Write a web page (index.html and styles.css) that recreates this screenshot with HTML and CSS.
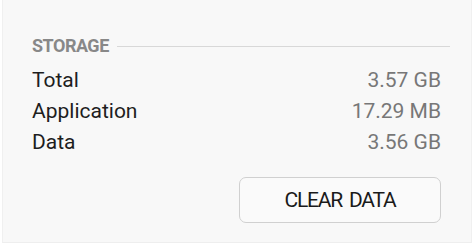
FILE: index.html
```html
<!DOCTYPE html>
<html lang="en">
<head>
    <meta charset="UTF-8">
    <meta name="viewport" content="width=device-width, initial-scale=1.0">
    <title>Storage</title>
    <link rel="stylesheet" href="styles.css">
</head>
<body>
    <div class="storage-card">
        <div class="section-header">
            <span class="section-title">STORAGE</span>
            <span class="section-line"></span>
        </div>

        <div class="storage-row">
            <span class="row-label">Total</span>
            <span class="row-value">3.57 GB</span>
        </div>
        <div class="storage-row">
            <span class="row-label">Application</span>
            <span class="row-value">17.29 MB</span>
        </div>
        <div class="storage-row">
            <span class="row-label">Data</span>
            <span class="row-value">3.56 GB</span>
        </div>

        <div class="actions">
            <button type="button" class="clear-btn">CLEAR DATA</button>
        </div>
    </div>
</body>
</html>
```

FILE: styles.css
```css
body {
    margin: 0;
    background-color: #ffffff;
    font-family: Roboto, "Noto Sans", sans-serif;
}

.storage-card {
    margin: 0 2px;
    height: 243px;
    box-sizing: border-box;
    padding: 35px 30px 0 29px;
    background-color: #f8f8f8;
    border-left: 1px solid #f0f0f0;
    border-right: 1px solid #f0f0f0;
    border-bottom: 1px solid #eeeeee;
}

.section-header {
    display: flex;
    align-items: center;
    gap: 8px;
    height: 21px;
    margin-bottom: 9px;
}

.section-title {
    font-size: 18px;
    line-height: 21px;
    font-weight: bold;
    letter-spacing: -0.5px;
    color: #888888;
}

.section-line {
    flex: 1;
    height: 1px;
    margin-top: 1px;
    margin-right: -9px;
    background-color: #d8d8d8;
}

.storage-row {
    display: flex;
    justify-content: space-between;
    font-size: 21px;
    line-height: 31px;
}

.row-label {
    color: #1e1e1e;
}

.row-value {
    color: #777777;
}

.actions {
    display: flex;
    justify-content: flex-end;
    margin-top: 19px;
}

.clear-btn {
    width: 202px;
    height: 46px;
    padding: 0;
    background-color: #fafafa;
    border: 1px solid #d0d0d0;
    border-radius: 7px;
    font-family: Roboto, "Noto Sans", sans-serif;
    font-size: 21px;
    letter-spacing: -1.2px;
    word-spacing: 3px;
    color: #1a1a1a;
    cursor: pointer;
}
```
